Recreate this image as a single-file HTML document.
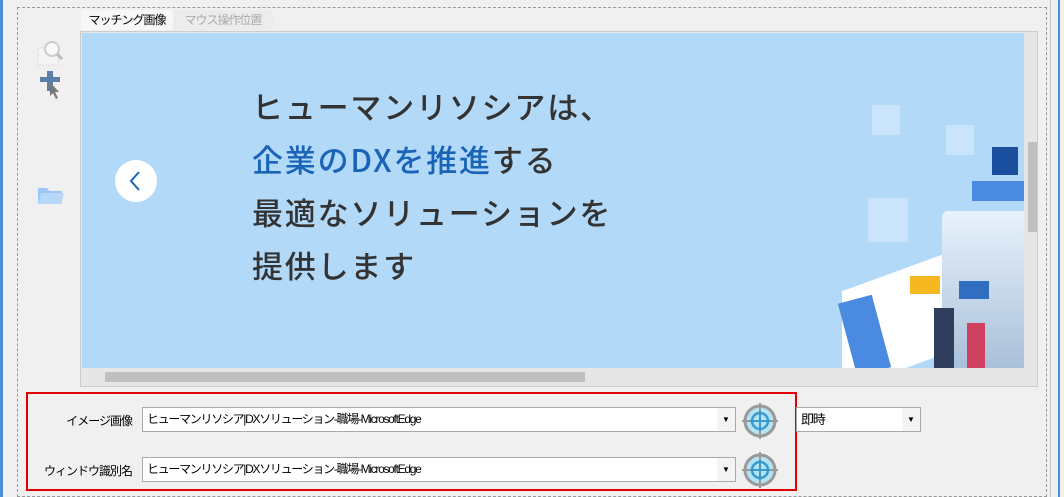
<!DOCTYPE html>
<html><head><meta charset="utf-8"><style>
*{margin:0;padding:0;box-sizing:border-box}
body{width:1064px;height:497px;background:#f0f0f0;position:relative;overflow:hidden;font-family:"Liberation Sans","Noto Sans CJK JP",sans-serif}
.a{position:absolute}
.combo{position:absolute;background:#fff;border:1px solid #a9a9a9;height:25px;font-size:12px;line-height:23px;padding-left:4px;color:#000;letter-spacing:-1.3px;white-space:nowrap}
.combo .ar{position:absolute;right:0;top:0;width:18px;height:23px;background:#f4f4f4;font-size:8px;text-align:center;line-height:23px;letter-spacing:0}
.lbl{position:absolute;font-size:12px;text-align:right;width:100px;color:#000;letter-spacing:-1px;white-space:nowrap}
.big{position:absolute;left:252px;font-size:31px;letter-spacing:1.8px;color:#333;white-space:nowrap;font-family:"Noto Sans CJK JP",sans-serif;font-weight:500}
.tab{position:absolute;top:10px;height:20px;font-size:12px;line-height:20px;letter-spacing:-1px;white-space:nowrap;text-align:center}
</style></head><body>
<div class="a" style="left:0;top:0;width:3px;height:497px;background:#4a90d9"></div>
<div class="a" style="left:1058px;top:0;width:2px;height:497px;background:#4a90d9"></div>
<div class="a" style="left:1050px;top:0;width:1px;height:497px;background:#c8c8c8"></div>
<div class="a" style="left:17px;top:7px;width:1030px;height:490px;border:1px dashed #999"></div>
<div class="tab" style="left:81px;width:92px;background:#f7f7f7">マッチング画像</div>
<div class="tab" style="left:173px;width:100px;background:#ececec;color:#aaa">マウス操作位置</div>
<!-- icons -->
<svg class="a" style="left:36px;top:38px" width="32" height="62"><rect x="2" y="10" width="20" height="17" fill="#f4f4f4" stroke="#ddd" stroke-dasharray="2 1"/><circle cx="16" cy="11" r="7" fill="#f8f8f8" stroke="#ccc" stroke-width="2"/><line x1="21" y1="16" x2="26" y2="21" stroke="#bbb" stroke-width="3"/><rect x="4" y="39" width="20" height="5" fill="#5b7fa6"/><rect x="11" y="33" width="6" height="20" fill="#5b7fa6"/><path d="M14 44 L14 58 L17 55 L20 61 L22 60 L19 54 L23 54Z" fill="#777"/></svg>
<svg class="a" style="left:37px;top:185px" width="28" height="20"><path d="M1 3h9l2 3h13v12H1z" fill="#9cc7f5"/><path d="M4 8h23l-3 11H1z" fill="#b8d8fa"/></svg>
<!-- viewer -->
<div class="a" style="left:80px;top:31px;width:958px;height:356px;border:1px solid #ccc;background:#e6e6e6"></div>
<div class="a" style="left:82px;top:33px;width:942px;height:335px;background:#b3d9f8;overflow:hidden">
<div class="big" style="left:170px;top:50px">ヒューマンリソシアは、</div>
<div class="big" style="left:170px;top:103px"><span style="color:#1a64b8">企業のDXを推進</span>する</div>
<div class="big" style="left:170px;top:156px">最適なソリューションを</div>
<div class="big" style="left:170px;top:209px">提供します</div>
<div class="a" style="left:33px;top:127px;width:42px;height:42px;border-radius:50%;background:#fff"></div>
<svg class="a" style="left:46px;top:137px" width="14" height="22"><path d="M11 2 L3 11 L11 20" fill="none" stroke="#1a64b8" stroke-width="2"/></svg>
<div class="a" style="left:790px;top:72px;width:28px;height:30px;background:#c9e4fb"></div>
<div class="a" style="left:864px;top:92px;width:28px;height:30px;background:#c9e4fb"></div>
<div class="a" style="left:786px;top:165px;width:40px;height:44px;background:#c9e4fb"></div>
<div class="a" style="left:860px;top:178px;width:90px;height:160px;background:linear-gradient(#e8f2fc,#a8bfd8);border-radius:6px 0 0 0"></div>
<div class="a" style="left:890px;top:148px;width:60px;height:20px;background:#4a8ae0"></div>
<div class="a" style="left:910px;top:114px;width:26px;height:28px;background:#1a4fa0"></div>
<div class="a" style="left:760px;top:240px;width:100px;height:100px;background:#fff;transform:skewY(-20deg)"></div>
<div class="a" style="left:765px;top:265px;width:35px;height:75px;background:#4a8ae0;transform:rotate(-15deg)"></div>
<div class="a" style="left:828px;top:243px;width:30px;height:18px;background:#f5b820"></div>
<div class="a" style="left:877px;top:248px;width:30px;height:18px;background:#2f6ec0"></div>
<div class="a" style="left:852px;top:275px;width:20px;height:60px;background:#2e3e5c"></div>
<div class="a" style="left:885px;top:290px;width:18px;height:45px;background:#d04060"></div>
</div>
<!-- scrollbars -->
<div class="a" style="left:1024px;top:33px;width:13px;height:335px;background:#e6e6e6"></div>
<div class="a" style="left:1028px;top:142px;width:9px;height:90px;background:#c0c0c0"></div>
<div class="a" style="left:82px;top:368px;width:942px;height:17px;background:#e6e6e6"></div>
<div class="a" style="left:105px;top:372px;width:480px;height:10px;background:#c0c0c0"></div>
<!-- bottom -->
<div class="a" style="left:26px;top:392px;width:771px;height:99px;border:2px solid #e00000"></div>
<div class="lbl" style="left:32px;top:412px">イメージ画像</div>
<div class="lbl" style="left:32px;top:462px">ウィンドウ識別名</div>
<div class="combo" style="left:142px;top:407px;width:594px">ヒューマンリソシア|DXソリューション-職場-MicrosoftEdge<div class="ar">▼</div></div>
<div class="combo" style="left:142px;top:457px;width:594px">ヒューマンリソシア|DXソリューション-職場-MicrosoftEdge<div class="ar">▼</div></div>
<div class="combo" style="left:796px;top:407px;width:125px;font-size:13px">即時<div class="ar">▼</div></div>
<svg class="a" style="left:741px;top:402px" width="38" height="38"><circle cx="19" cy="19" r="15" fill="#b3e2f0" stroke="#999" stroke-width="3"/><line x1="19" y1="1" x2="19" y2="37" stroke="#999" stroke-width="2"/><line x1="1" y1="19" x2="37" y2="19" stroke="#999" stroke-width="2"/><circle cx="19" cy="19" r="8" fill="none" stroke="#3a9ad0" stroke-width="2.5"/><line x1="19" y1="9" x2="19" y2="29" stroke="#3a9ad0" stroke-width="2"/><line x1="9" y1="19" x2="29" y2="19" stroke="#3a9ad0" stroke-width="2"/></svg>
<svg class="a" style="left:741px;top:451px" width="38" height="38"><circle cx="19" cy="19" r="15" fill="#b3e2f0" stroke="#999" stroke-width="3"/><line x1="19" y1="1" x2="19" y2="37" stroke="#999" stroke-width="2"/><line x1="1" y1="19" x2="37" y2="19" stroke="#999" stroke-width="2"/><circle cx="19" cy="19" r="8" fill="none" stroke="#3a9ad0" stroke-width="2.5"/><line x1="19" y1="9" x2="19" y2="29" stroke="#3a9ad0" stroke-width="2"/><line x1="9" y1="19" x2="29" y2="19" stroke="#3a9ad0" stroke-width="2"/></svg>
</body></html>
